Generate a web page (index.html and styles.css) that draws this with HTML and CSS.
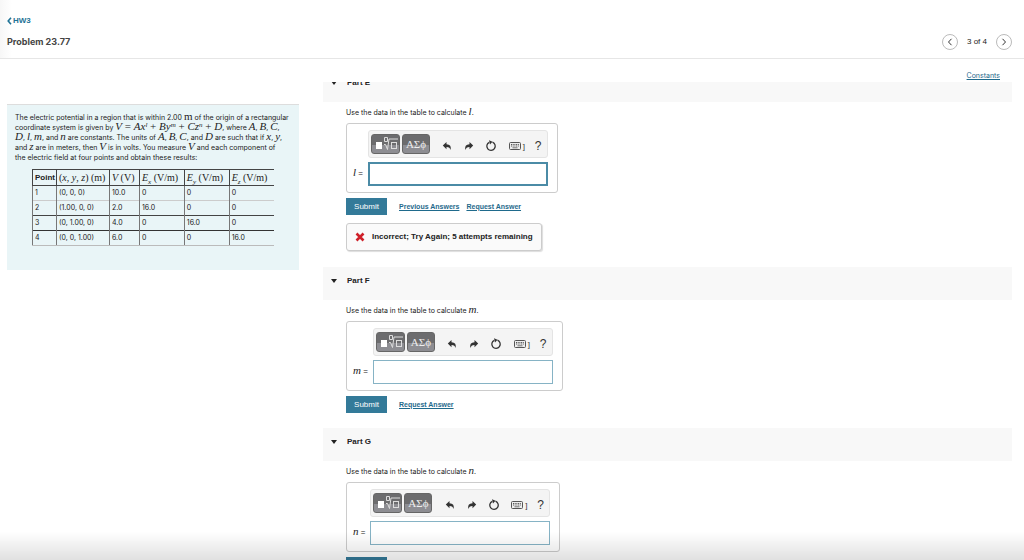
FILE: index.html
```html
<!DOCTYPE html>
<html lang="en">
<head>
    <meta charset="UTF-8">
    <meta name="viewport" content="width=device-width, initial-scale=1.0">
    <title>Problem 23.77</title>
    <link rel="stylesheet" href="styles.css">
</head>
<body>
    <!-- Icons shared by the answer toolbars -->
    <svg class="sprite" aria-hidden="true">
        <symbol id="icon-template" viewBox="0 0 27 18">
            <rect x="4" y="7" width="6" height="7" fill="#fff"/>
            <path d="M12.500 2.500h3v4h-3z M12 9.500h1.500l2 5 1.500-10.500H26" fill="none" stroke="#ddd"/>
            <rect x="19.500" y="7.500" width="5" height="6" fill="none" stroke="#ddd"/>
        </symbol>
        <symbol id="icon-undo" viewBox="0 0 10 10">
            <path d="M4.500 1v2.200C8 3.300 9.500 5.500 8.500 9 8 7 7 6 4.500 6v2.200L.8 4.600z" fill="#333"/>
        </symbol>
        <symbol id="icon-redo" viewBox="0 0 10 10">
            <path d="M5.500 1v2.200C2 3.300.5 5.500 1.500 9 2 7 3 6 5.500 6v2.200l3.700-3.600z" fill="#333"/>
        </symbol>
        <symbol id="icon-reset" viewBox="0 0 12 12">
            <path d="M7.500 2.200a4.200 4.200 0 1 1-3.200.1" fill="none" stroke="#333" stroke-width="1.300"/>
            <path d="M4 .3l3.500 1.500L5 4.500z" fill="#333"/>
        </symbol>
        <symbol id="icon-keyboard" viewBox="0 0 12 8">
            <rect x=".5" y=".5" width="11" height="7" rx="1" fill="#eee" stroke="#555"/>
            <path d="M2 2.500h8M2 4h8" stroke="#555" stroke-width="1" stroke-dasharray="1 .7"/>
            <path d="M3.500 5.800h5" stroke="#555" stroke-width=".8"/>
        </symbol>
    </svg>

    <header class="page-header">
        <div>
            <a class="back-link" href="#">
                <svg class="back-icon" viewBox="0 0 5 8"><path d="M4 .8L1.200 4 4 7.200" fill="none" stroke="#1f7396" stroke-width="1.600"/></svg>HW3
            </a>
            <h1>Problem 23.77</h1>
        </div>
        <nav class="pager">
            <button type="button" class="pager-button" aria-label="Previous">
                <svg viewBox="0 0 6 8"><path d="M4.500 .8L1.500 4l3 3.200" fill="none" stroke="#333"/></svg>
            </button>
            <span>3 of 4</span>
            <button type="button" class="pager-button" aria-label="Next">
                <svg viewBox="0 0 6 8"><path d="M1.500 .8l3 3.200-3 3.200" fill="none" stroke="#333"/></svg>
            </button>
        </nav>
    </header>

    <main class="content">
        <aside class="problem">
            <p>
                The electric potential in a region that is within 2.00 <span class="unit">m</span> of the origin of a rectangular<br>
                coordinate system is given by <span class="math"><i>V</i> = <i>Ax<sup>l</sup></i> + <i>By<sup>m</sup></i> + <i>Cz<sup>n</sup></i> + <i>D</i></span>, where <i class="math">A</i>, <i class="math">B</i>, <i class="math">C</i>,<br>
                <i class="math">D</i>, <i class="math">l</i>, <i class="math">m</i>, and <i class="math">n</i> are constants. The units of <i class="math">A</i>, <i class="math">B</i>, <i class="math">C</i>, and <i class="math">D</i> are such that if <i class="math">x</i>, <i class="math">y</i>,<br>
                and <i class="math">z</i> are in meters, then <i class="math">V</i> is in volts. You measure <i class="math">V</i> and each component of<br>
                the electric field at four points and obtain these results:
            </p>
            <table class="results">
                <thead>
                    <tr>
                        <th class="point">Point</th>
                        <th class="math">(<i>x</i>, <i>y</i>, <i>z</i>) (m)</th>
                        <th class="math"><i>V</i> (V)</th>
                        <th class="math"><i>E<sub>x</sub></i> (V/m)</th>
                        <th class="math"><i>E<sub>y</sub></i> (V/m)</th>
                        <th class="math"><i>E<sub>z</sub></i> (V/m)</th>
                    </tr>
                </thead>
                <tbody>
                    <tr><td>1</td><td>(0, 0, 0)</td><td>10.0</td><td>0</td><td>0</td><td>0</td></tr>
                    <tr><td>2</td><td>(1.00, 0, 0)</td><td>2.0</td><td>16.0</td><td>0</td><td>0</td></tr>
                    <tr><td>3</td><td>(0, 1.00, 0)</td><td>4.0</td><td>0</td><td>16.0</td><td>0</td></tr>
                    <tr><td>4</td><td>(0, 0, 1.00)</td><td>6.0</td><td>0</td><td>0</td><td>16.0</td></tr>
                </tbody>
            </table>
        </aside>

        <div class="work">
            <a class="constants" href="#">Constants</a>
            <div class="parts">
                <section class="part">
                    <h2><span class="caret"></span>Part E</h2>
                    <div class="part-body">
                        <p>Use the data in the table to calculate <i class="math">l</i>.</p>
                        <div class="answer">
                            <label for="answer-l"><i class="math">l</i> =</label>
                            <div class="editor">
                                <div class="toolbar">
                                    <button type="button" class="tool-dark" aria-label="Templates"><svg><use href="#icon-template"/></svg></button>
                                    <button type="button" class="tool-dark">ΑΣϕ</button>
                                    <button type="button" class="tool first" aria-label="Undo"><svg><use href="#icon-undo"/></svg></button>
                                    <button type="button" class="tool" aria-label="Redo"><svg><use href="#icon-redo"/></svg></button>
                                    <button type="button" class="tool reset" aria-label="Reset"><svg><use href="#icon-reset"/></svg></button>
                                    <button type="button" class="tool keyboard" aria-label="Keyboard shortcuts"><svg><use href="#icon-keyboard"/></svg>]</button>
                                    <button type="button" class="tool help">?</button>
                                </div>
                                <input type="text" id="answer-l" class="active">
                            </div>
                        </div>
                        <div class="actions">
                            <button type="submit" class="submit">Submit</button>
                            <a href="#">Previous Answers</a>
                            <a href="#">Request Answer</a>
                        </div>
                        <div class="feedback">
                            <svg viewBox="0 0 10 10"><path d="M1.500 1.500l7 7M8.500 1.500l-7 7" stroke="#cf2029" stroke-width="2.600"/></svg>
                            Incorrect; Try Again; 5 attempts remaining
                        </div>
                    </div>
                </section>

                <section class="part">
                    <h2><span class="caret"></span>Part F</h2>
                    <div class="part-body">
                        <p>Use the data in the table to calculate <i class="math">m</i>.</p>
                        <div class="answer">
                            <label for="answer-m"><i class="math">m</i> =</label>
                            <div class="editor">
                                <div class="toolbar">
                                    <button type="button" class="tool-dark" aria-label="Templates"><svg><use href="#icon-template"/></svg></button>
                                    <button type="button" class="tool-dark">ΑΣϕ</button>
                                    <button type="button" class="tool first" aria-label="Undo"><svg><use href="#icon-undo"/></svg></button>
                                    <button type="button" class="tool" aria-label="Redo"><svg><use href="#icon-redo"/></svg></button>
                                    <button type="button" class="tool reset" aria-label="Reset"><svg><use href="#icon-reset"/></svg></button>
                                    <button type="button" class="tool keyboard" aria-label="Keyboard shortcuts"><svg><use href="#icon-keyboard"/></svg>]</button>
                                    <button type="button" class="tool help">?</button>
                                </div>
                                <input type="text" id="answer-m">
                            </div>
                        </div>
                        <div class="actions">
                            <button type="submit" class="submit">Submit</button>
                            <a href="#">Request Answer</a>
                        </div>
                    </div>
                </section>

                <section class="part">
                    <h2><span class="caret"></span>Part G</h2>
                    <div class="part-body">
                        <p>Use the data in the table to calculate <i class="math">n</i>.</p>
                        <div class="answer">
                            <label for="answer-n"><i class="math">n</i> =</label>
                            <div class="editor">
                                <div class="toolbar">
                                    <button type="button" class="tool-dark" aria-label="Templates"><svg><use href="#icon-template"/></svg></button>
                                    <button type="button" class="tool-dark">ΑΣϕ</button>
                                    <button type="button" class="tool first" aria-label="Undo"><svg><use href="#icon-undo"/></svg></button>
                                    <button type="button" class="tool" aria-label="Redo"><svg><use href="#icon-redo"/></svg></button>
                                    <button type="button" class="tool reset" aria-label="Reset"><svg><use href="#icon-reset"/></svg></button>
                                    <button type="button" class="tool keyboard" aria-label="Keyboard shortcuts"><svg><use href="#icon-keyboard"/></svg>]</button>
                                    <button type="button" class="tool help">?</button>
                                </div>
                                <input type="text" id="answer-n">
                            </div>
                        </div>
                        <div class="actions">
                            <button type="submit" class="submit">Submit</button>
                        </div>
                    </div>
                </section>
            </div>
        </div>
    </main>
</body>
</html>
```
FILE: styles.css
```css
* {
    box-sizing: border-box;
}
body {
    display: flex;
    flex-direction: column;
    height: 100vh;
    margin: 0;
    overflow: hidden;
    background: white;
    color: #222;
    font-family: "Liberation Sans", Arial, sans-serif;
    font-size: 8px;
    line-height: 10px;
}
/* shade along the bottom edge of the window */
body::after {
    content: "";
    position: fixed;
    left: 0;
    right: 0;
    bottom: 0;
    height: 28px;
    background: linear-gradient(rgba(0,0,0,0), rgba(0,0,0,0.12));
    pointer-events: none;
}
h1, h2, p {
    margin: 0;
}
button, input {
    font-family: inherit;
    font-size: inherit;
    margin: 0;
    padding: 0;
}
a {
    color: #1f6a8c;
}
p, td, .constants {
    font-family: Inter, Arial, sans-serif;
    font-size: 7px;
}
.sprite {
    position: absolute;
    width: 0;
    height: 0;
}
.math, .unit {
    font-family: "Liberation Serif", "Times New Roman", serif;
    font-size: 11px;
    line-height: 0;
}
.page-header {
    display: flex;
    flex-shrink: 0;
    justify-content: space-between;
    align-items: flex-end;
    height: 59px;
    padding: 0 12px 8px 7px;
    border-bottom: 1px solid #e6e6e6;
    background: linear-gradient(to right, #f7f7f7, white 12px);
}
.back-link {
    display: flex;
    align-items: center;
    gap: 1px;
    margin-bottom: 10px;
    color: #1f7396;
    font-weight: bold;
    text-decoration: none;
}
.back-icon {
    width: 5px;
    height: 8px;
}
h1 {
    padding-bottom: 2px;
    color: #444;
    font-family: Inter, Arial, sans-serif;
    font-size: 9px;
    line-height: 12px;
}
.pager {
    display: flex;
    align-items: center;
    gap: 9px;
}
.pager-button {
    display: flex;
    align-items: center;
    justify-content: center;
    width: 16px;
    height: 16px;
    border: 1px solid #bbb;
    border-radius: 50%;
    background: white;
}
.pager-button svg {
    width: 6px;
    height: 8px;
}
.content {
    display: flex;
    flex: 1;
    align-items: flex-start;
    gap: 24px;
    min-height: 0;
    padding: 0 12px 0 7px;
}
.problem {
    flex: 0 0 292px;
    min-width: 0;
    min-height: 165px;
    margin-top: 45px;
    padding: 8px 0 24px 8px;
    border-top: 1px solid #ddd;
    background: #e9f5f7;
    white-space: nowrap;
}
sup, sub {
    font-size: 7px;
    line-height: 0;
}
sup {
    vertical-align: 3px;
}
.results {
    width: 242px;
    margin: 6px 0 0 17px;
    border-collapse: collapse;
    table-layout: fixed;
}
.results th, .results td {
    height: 15px;
    padding: 0 2px;
    border-top: 1px solid #777;
    border-left: 1px solid #777;
    text-align: left;
}
.results th {
    height: 16px;
    border-color: #444;
    font-size: 10px;
    font-weight: normal;
    line-height: 12px;
}
.results .point {
    width: 24px;
    font-size: 8px;
    font-weight: bold;
}
.results th:nth-child(2) {
    width: 53px;
}
.results th:nth-child(3) {
    width: 30px;
}
.results tbody tr:nth-child(odd) td {
    border-top-color: #444;
}
.results tbody tr:nth-child(2) td {
    border-top-color: #ccc;
}
.results tbody tr:last-child td {
    border-top-color: #333;
    border-bottom: 1px solid #bbb;
}
.work {
    display: flex;
    flex: 1;
    flex-direction: column;
    height: 100%;
    min-width: 0;
}
.constants {
    align-self: flex-end;
    margin: 12px 12px 1px 0;
}
.parts {
    flex: 1;
    min-height: 0;
    overflow: hidden;
}
/* the list is scrolled part way past the first heading */
.parts .part:first-child {
    margin-top: -13px;
}
.part h2 {
    display: flex;
    align-items: center;
    gap: 10px;
    height: 33px;
    padding: 0 8px 6px;
    background: #f8f8f8;
    font-size: 8px;
}
.caret {
    border: 3px solid transparent;
    border-top: 4px solid #222;
    border-bottom: 0;
}
.part-body {
    display: flex;
    flex-direction: column;
    align-items: flex-start;
    padding: 6px 0 15px 23px;
}
.part-body p {
    height: 15px;
}
.answer {
    display: flex;
    align-items: flex-end;
    gap: 5px;
    height: 70px;
    padding: 6px 9px 6px 6px;
    border: 1px solid #ccc;
    border-radius: 3px;
}
.answer label {
    margin-bottom: 7px;
}
.editor {
    width: 180px;
}
.toolbar {
    display: flex;
    align-items: center;
    height: 28px;
    margin-bottom: 4px;
    padding: 0 2px;
    border: 1px solid #e4e4e4;
    border-radius: 3px;
    background: #f4f4f4;
}
.tool-dark {
    width: 29px;
    height: 20px;
    margin-right: 2px;
    border: 1px solid #666;
    border-radius: 3px;
    background: linear-gradient(#6c6c6e 55%, #8d8d92 55%);
    color: #eee;
    font-family: "Liberation Serif", serif;
    font-size: 11px;
    line-height: 16px;
}
.tool-dark svg {
    display: block;
    width: 27px;
    height: 18px;
}
.tool {
    display: flex;
    align-items: center;
    justify-content: center;
    width: 23px;
    height: 16px;
    margin-top: 4px;
    border: 0;
    background: none;
    color: #333;
}
.tool.first {
    margin-left: 4px;
}
.tool svg {
    width: 10px;
    height: 10px;
}
.tool.reset svg {
    width: 12px;
    height: 12px;
}
.tool.keyboard {
    gap: 2px;
    width: 30px;
}
.tool.keyboard svg {
    width: 12px;
    height: 8px;
}
.tool.help {
    width: 14px;
    font-size: 12px;
}
.answer input {
    display: block;
    width: 100%;
    height: 24px;
    padding: 0 4px;
    border: 1px solid #86b3c5;
    background: white;
}
.answer input.active {
    border: 2px solid #4b8ba6;
}
.actions {
    display: flex;
    align-items: center;
    gap: 7px;
    margin-top: 5px;
}
.actions a {
    font-size: 7px;
    font-weight: bold;
}
.submit {
    width: 41px;
    height: 17px;
    margin-right: 5px;
    border: 0;
    background: #337a99;
    color: white;
}
.feedback {
    display: flex;
    align-items: center;
    gap: 7px;
    height: 28px;
    margin: 8px 0 1px;
    padding: 0 8px;
    border: 1px solid #ccc;
    border-radius: 3px;
    background: #fafafa;
    box-shadow: 1px 1px 1px #ddd;
    font-weight: bold;
}
.feedback svg {
    width: 10px;
    height: 10px;
}
```
